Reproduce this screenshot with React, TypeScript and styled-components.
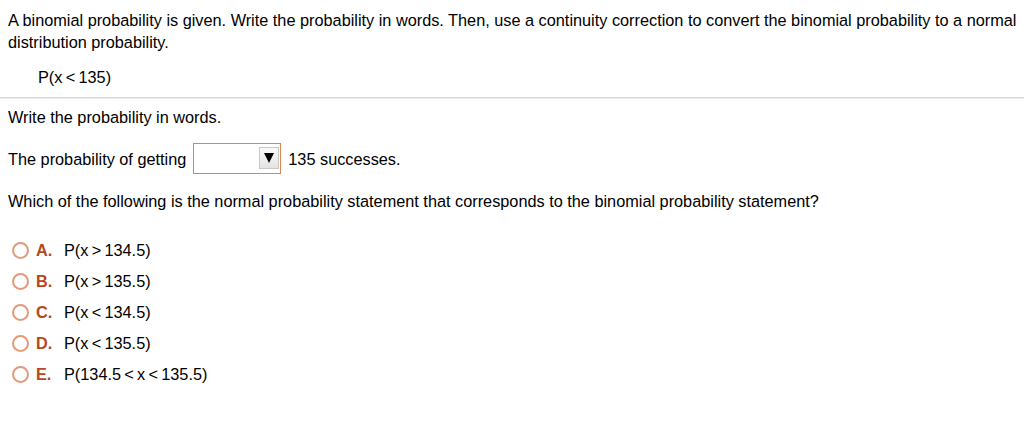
import React from "react";
import styled, { createGlobalStyle } from "styled-components";

const Global = createGlobalStyle`
  html, body { margin: 0; padding: 0; background: #fff; }
  body { font-family: "Liberation Sans", Arial, sans-serif; color: #000; }
`;

const Page = styled.div`
  width: 1024px;
  font-size: 16.3px;
  line-height: 22px;
`;

const Intro = styled.div`
  padding: 9px 4px 0 8px;
`;

const Stem = styled.div`
  padding: 13px 0 0 30px;
  line-height: 22px;
`;

const Divider = styled.hr`
  margin: 9px 0 0 0;
  border: 0;
  border-top: 1px solid #d6d6d6;
  border-bottom: 1px solid #eeeeee;
  height: 0;
`;

const Body = styled.div`
  padding: 7px 8px 0 8px;
`;

const Line = styled.div<{ $top: number }>`
  margin-top: ${(p) => p.$top}px;
  display: flex;
  align-items: center;
`;

const Select = styled.div`
  box-sizing: border-box;
  width: 88px;
  height: 31px;
  margin: 0 7px 0 7px;
  border: 1px solid #d9874f;
  background: #fff;
  display: flex;
  justify-content: flex-end;
  align-items: flex-start;
  padding: 3px 1px 0 0;
`;

const Arrow = styled.div`
  box-sizing: border-box;
  width: 20px;
  height: 22px;
  background: linear-gradient(#fafafa, #e4e4e4);
  border: 1px solid #c8c8c8;
  display: flex;
  align-items: center;
  justify-content: center;
`;

const Options = styled.div`
  margin-top: 27px;
  display: flex;
  flex-direction: column;
  gap: 9px;
`;

const Option = styled.label`
  display: flex;
  align-items: center;
  height: 22px;
`;

const Radio = styled.span`
  box-sizing: border-box;
  width: 17px;
  height: 17px;
  border-radius: 50%;
  border: 2px solid #e39a78;
  margin: 0 7px 0 4px;
  background: #fff;
`;

const Letter = styled.span`
  color: #b7471d;
  font-weight: bold;
  width: 28px;
`;

const options = [
  ["A.", "P(x\u2009>\u2009134.5)"],
  ["B.", "P(x\u2009>\u2009135.5)"],
  ["C.", "P(x\u2009<\u2009134.5)"],
  ["D.", "P(x\u2009<\u2009135.5)"],
  ["E.", "P(134.5\u2009<\u2009x\u2009<\u2009135.5)"],
];

export default function App() {
  return (
    <Page>
      <Global />
      <Intro>
        A binomial probability is given. Write the probability in words. Then, use a continuity correction to convert the binomial probability to a normal distribution probability.
        <Stem>P(x{"\u2009"}&lt;{"\u2009"}135)</Stem>
      </Intro>
      <Divider />
      <Body>
        <Line $top={0}>Write the probability in words.</Line>
        <Line $top={15}>
          The probability of getting
          <Select>
            <Arrow>
              <svg width="12" height="12" viewBox="0 0 12 12">
                <polygon points="1,1 11,1 6,11" fill="#000" />
              </svg>
            </Arrow>
          </Select>
          135 successes.
        </Line>
        <Line $top={16}>
          Which of the following is the normal probability statement that corresponds to the binomial probability statement?
        </Line>
        <Options>
          {options.map(([l, t]) => (
            <Option key={l}>
              <Radio />
              <Letter>{l}</Letter>
              {t}
            </Option>
          ))}
        </Options>
      </Body>
    </Page>
  );
}
